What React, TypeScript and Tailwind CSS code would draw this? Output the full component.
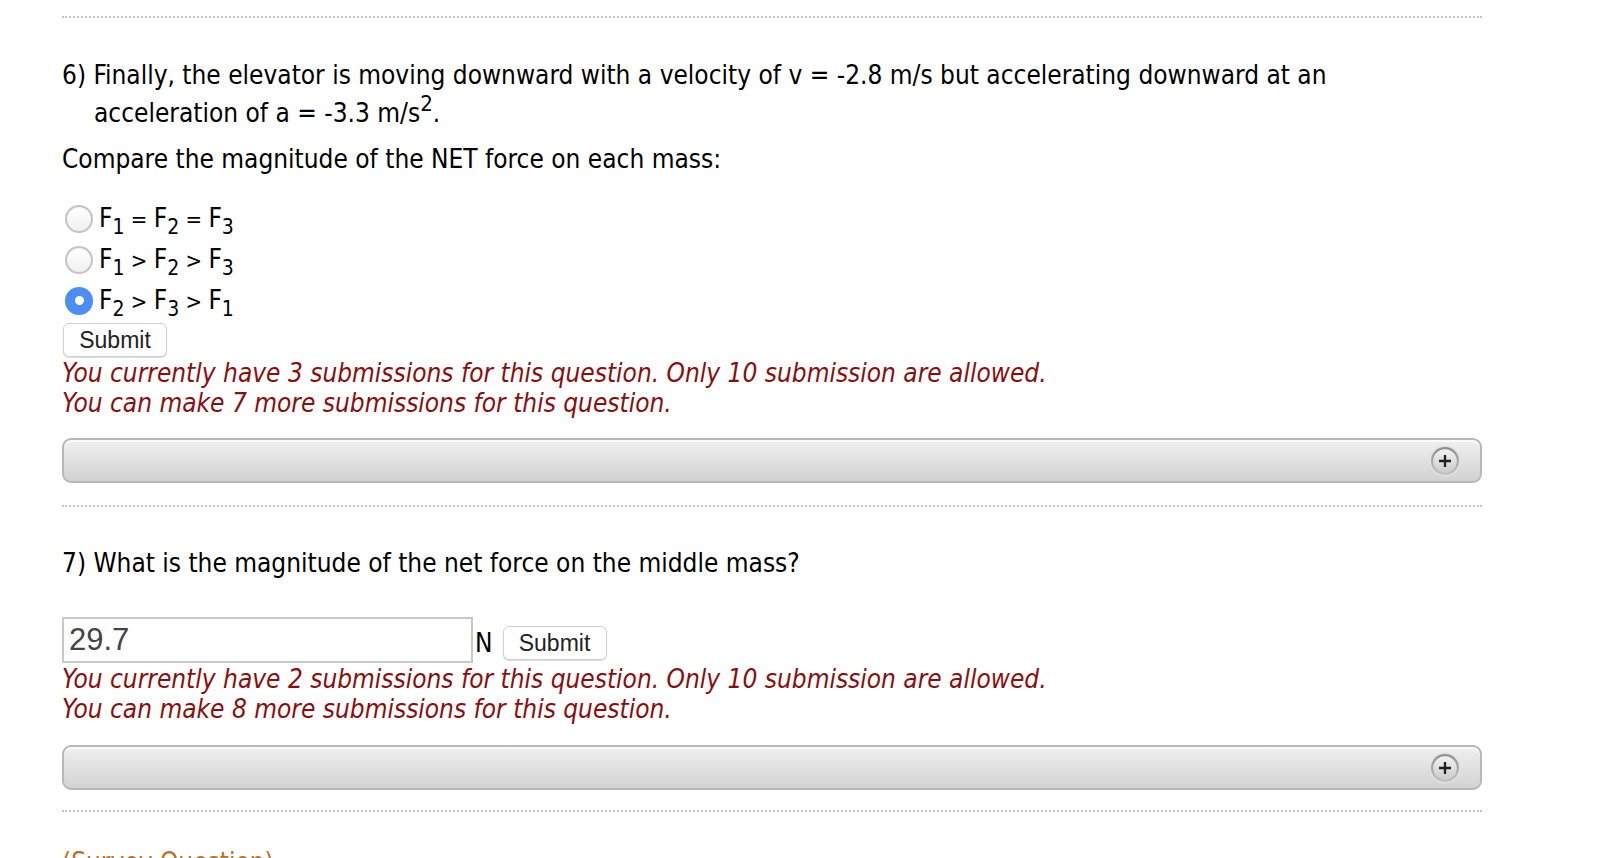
import type { ReactNode } from "react";

const bodyFont = { fontFamily: '"DejaVu Sans Condensed", "DejaVu Sans", sans-serif' };
const uiFont = { fontFamily: '"Liberation Sans", Arial, sans-serif' };

function Dotted() {
  return <div className="h-0 border-t-2 border-dotted border-[#c4c4c4]" />;
}

function F({ n }: { n: number }) {
  return (
    <span>
      F<span className="relative top-[7px] text-[21px] leading-none">{n}</span>
    </span>
  );
}

function Op({ children }: { children: ReactNode }) {
  return <span className="text-[22px]"> {children} </span>;
}

function Radio({ checked, children }: { checked?: boolean; children: ReactNode }) {
  return (
    <label className="flex h-[41px] items-center">
      {checked ? (
        <span className="ml-[3px] mr-[6px] flex h-[28px] w-[28px] items-center justify-center rounded-full bg-[#4b8df3]">
          <span className="h-[9px] w-[9px] rounded-full bg-white" />
        </span>
      ) : (
        <span className="ml-[3px] mr-[6px] h-[28px] w-[28px] rounded-full border-2 border-[#c4c4c4] bg-gradient-to-b from-white to-[#f0f0f0] shadow-[inset_0_1px_1px_rgba(0,0,0,0.06)]" />
      )}
      <span className="text-[26px] leading-[41px]">{children}</span>
    </label>
  );
}

function SubmitButton({ className = "" }: { className?: string }) {
  return (
    <button
      className={`h-[34px] w-[104px] rounded-[6px] border border-[#d0d0d0] bg-white text-[23px] leading-none text-[#222] shadow-[0_1px_1px_rgba(0,0,0,0.15)] ${className}`}
      style={uiFont}
    >
      Submit
    </button>
  );
}

function Notice({ have, left }: { have: number; left: number }) {
  return (
    <div className="text-[26px] italic leading-[30px] text-[#8b0e0e]">
      <p>You currently have {have} submissions for this question. Only 10 submission are allowed.</p>
      <p>You can make {left} more submissions for this question.</p>
    </div>
  );
}

function Expander({ id }: { id: string }) {
  return (
    <div className="flex h-[45px] items-center justify-end rounded-[9px] border-2 border-[#b9b9b9] bg-gradient-to-b from-[#f0f0f0] to-[#d2d2d2] pr-[19px] shadow-[inset_0_2px_0_rgba(255,255,255,0.7)]">
      <svg width="32" height="32" viewBox="0 0 32 32">
        <defs>
          <linearGradient id={`${id}-ring`} x1="0" y1="0" x2="0" y2="1">
            <stop offset="0%" stopColor="#8f8f8f" />
            <stop offset="100%" stopColor="#c4c4c4" />
          </linearGradient>
          <linearGradient id={`${id}-face`} x1="0" y1="0" x2="0" y2="1">
            <stop offset="0%" stopColor="#f2f2f2" />
            <stop offset="100%" stopColor="#cbcbcb" />
          </linearGradient>
        </defs>
        <circle cx="16" cy="16" r="15.5" fill="#e2e2e2" />
        <circle cx="16" cy="16" r="14" fill={`url(#${id}-ring)`} />
        <circle cx="16" cy="16" r="11.8" fill={`url(#${id}-face)`} />
        <path d="M16 10v12M10 16h12" stroke="#1f1f1f" strokeWidth="2.3" />
      </svg>
    </div>
  );
}

export default function App() {
  return (
    <div className="h-[858px] overflow-hidden bg-white text-black" style={bodyFont}>
      <div className="w-[1482px] pl-[62px] pt-[16px]">
        <Dotted />

        <section className="text-[26px] leading-[38px]">
          <p className="mt-[38px] pl-[32px] -indent-[32px]">
            6) Finally, the elevator is moving downward with a velocity of v = -2.8 m/s but accelerating downward at an
            <br />
            acceleration of a = -3.3 m/s
            <sup className="text-[22px] leading-none">2</sup>.
          </p>
          <p className="mt-[8px]">Compare the magnitude of the NET force on each mass:</p>

          <div className="mt-[20px]">
            <Radio>
              <F n={1} />
              <Op>=</Op>
              <F n={2} />
              <Op>=</Op>
              <F n={3} />
            </Radio>
            <Radio>
              <F n={1} />
              <Op>&gt;</Op>
              <F n={2} />
              <Op>&gt;</Op>
              <F n={3} />
            </Radio>
            <Radio checked>
              <F n={2} />
              <Op>&gt;</Op>
              <F n={3} />
              <Op>&gt;</Op>
              <F n={1} />
            </Radio>
          </div>
          <SubmitButton className="ml-[1px] mt-[2px] block" />
          <div className="mt-[1px]">
            <Notice have={3} left={7} />
          </div>
        </section>

        <div className="mt-[20px]">
          <Expander id="e1" />
        </div>
        <div className="mt-[22px]">
          <Dotted />
        </div>

        <section className="text-[26px] leading-[38px]">
          <p className="mt-[37px]">7) What is the magnitude of the net force on the middle mass?</p>
          <div className="mt-[35px] flex items-center">
            <input
              readOnly
              value="29.7"
              className="h-[46px] w-[411px] border-2 border-[#c8c8c8] px-[5px] text-[31px] text-[#444] outline-none"
              style={uiFont}
            />
            <span className="ml-[2px] mr-[10px] mt-[6px] text-[26px] leading-[30px]">N</span>
            <SubmitButton className="mt-[6px]" />
          </div>
          <div className="mt-[1px]">
            <Notice have={2} left={8} />
          </div>
        </section>

        <div className="mt-[21px]">
          <Expander id="e2" />
        </div>
        <div className="mt-[20px]">
          <Dotted />
        </div>

        <p className="mt-[35px] text-[26px] leading-[30px] text-[#b8732a]">(Survey Question)</p>
      </div>
    </div>
  );
}
